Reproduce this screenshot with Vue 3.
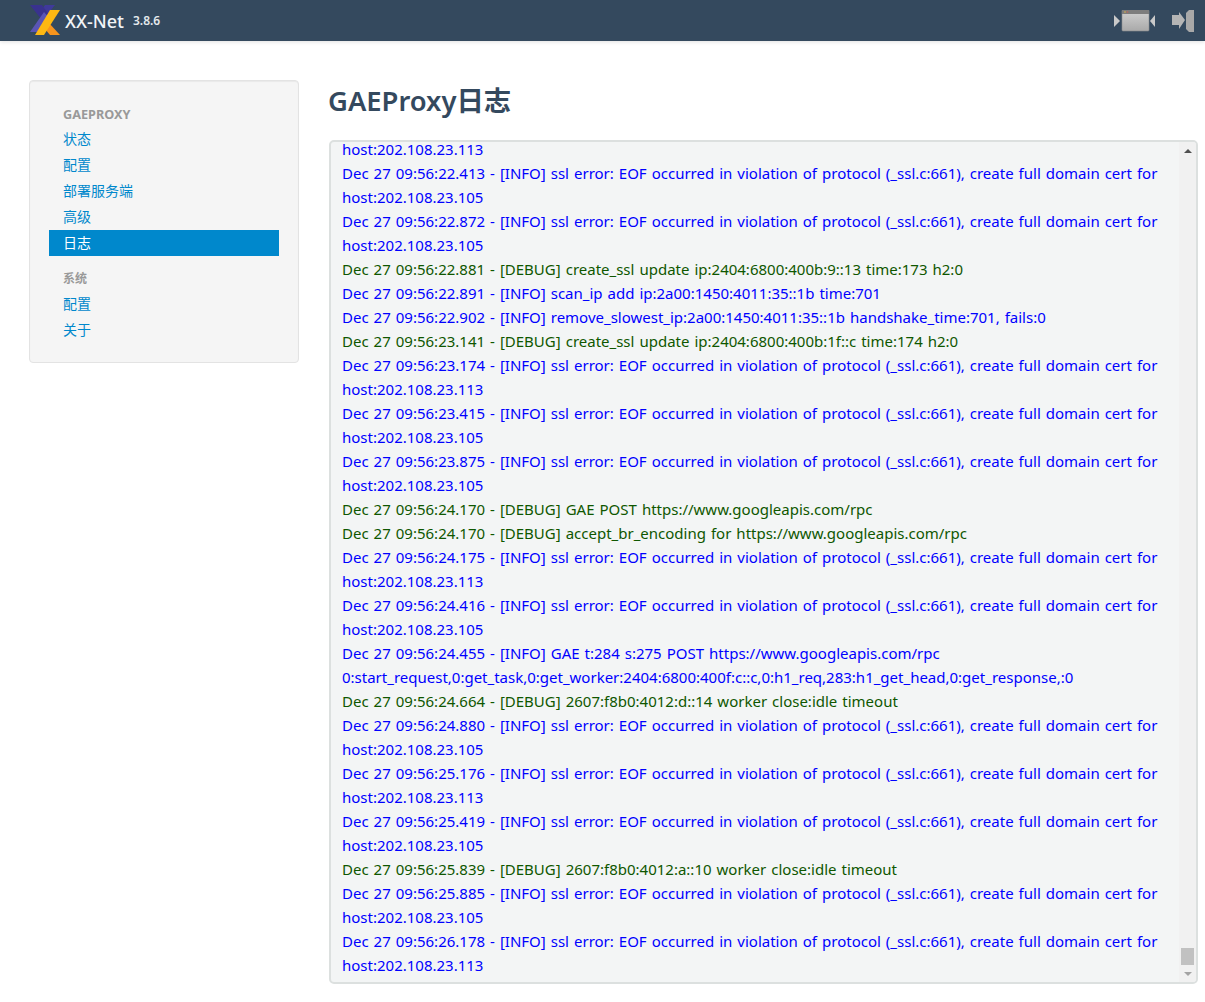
<template>
  <div class="page">
    <header class="navbar">
      <div class="brand">
        <svg class="logo" viewBox="0 0 32 32" width="32" height="32">
          <polygon points="15,0 25,0 17,10 12,4" fill="#3f3a9a" />
          <polygon points="0,0 12,0 22,14 16,20" fill="#39328f" />
          <polygon points="0,27 14,7 20,14 7,27" fill="#5a55b5" />
          <polygon points="19,18 30,30 20,30 15,24" fill="#f7941d" />
          <polygon points="20,5 30,5 14,30 5,30" fill="#fdb813" />
        </svg>
        <span class="brand-name">XX-Net</span>
        <span class="version">3.8.6</span>
      </div>
      <div class="nav-icons">
        <svg width="42" height="22" viewBox="0 0 42 22">
          <defs>
            <linearGradient id="win" x1="0" y1="0" x2="0" y2="1">
              <stop offset="0" stop-color="#d2d2d2" />
              <stop offset="1" stop-color="#a9a9a9" />
            </linearGradient>
          </defs>
          <polygon points="0,5 6,11 0,17" fill="#c9c9c9" />
          <rect x="8" y="0" width="27" height="21" rx="1" fill="url(#win)" stroke="#8e8e8e" stroke-width="0.6" />
          <rect x="8" y="0" width="27" height="4" fill="#7d7d7d" />
          <circle cx="11" cy="2" r="0.8" fill="#d8b24a" />
          <circle cx="13.5" cy="2" r="0.8" fill="#c8645a" />
          <polygon points="41,5 36,11 41,17" fill="#c9c9c9" />
        </svg>
        <svg width="23" height="22" viewBox="0 0 23 22">
          <polygon points="0,5 7,5 7,2 13,10 7,19 7,15 0,15" fill="#b5b5b5" />
          <polygon points="14,3 17,0 22,0 22,22 17,22 14,19" fill="#a8a8a8" />
        </svg>
      </div>
    </header>

    <div class="content">
      <aside class="sidebar">
        <ul class="nav-list">
          <template v-for="item in menu" :key="item.label + item.header">
            <li v-if="item.header" class="nav-header" :class="{ second: item.second }">{{ item.label }}</li>
            <li v-else class="nav-item" :class="{ active: item.active }">{{ item.label }}</li>
          </template>
        </ul>
      </aside>

      <main class="main">
        <h2 class="title">GAEProxy日志</h2>
        <div class="log-box">
          <div class="log-view">
            <div class="log-lines">
              <div v-for="(row, i) in rows" :key="i" :class="row.level">{{ row.text }}</div>
            </div>
          </div>
          <div class="scrollbar">
            <span class="arrow up"></span>
            <span class="thumb"></span>
            <span class="arrow down"></span>
          </div>
        </div>
      </main>
    </div>
  </div>
</template>

<script setup>
const menu = [
  { label: 'GAEPROXY', header: true },
  { label: '状态' },
  { label: '配置' },
  { label: '部署服务端' },
  { label: '高级' },
  { label: '日志', active: true },
  { label: '系统', header: true, second: true },
  { label: '配置' },
  { label: '关于' },
]

function sslErr(time, host) {
  return {
    level: 'info',
    text: `Dec 27 09:56:${time} - [INFO] ssl error: EOF occurred in violation of protocol (_ssl.c:661), create full domain cert for host:202.108.23.${host}`,
  }
}
const info = (time, msg) => ({ level: 'info', text: `Dec 27 09:56:${time} - [INFO] ${msg}` })
const debug = (time, msg) => ({ level: 'debug', text: `Dec 27 09:56:${time} - [DEBUG] ${msg}` })

const rows = [
  { level: 'info', text: 'host:202.108.23.113' },
  sslErr('22.413', 105),
  sslErr('22.872', 105),
  debug('22.881', 'create_ssl update ip:2404:6800:400b:9::13 time:173 h2:0'),
  info('22.891', 'scan_ip add ip:2a00:1450:4011:35::1b time:701'),
  info('22.902', 'remove_slowest_ip:2a00:1450:4011:35::1b handshake_time:701, fails:0'),
  debug('23.141', 'create_ssl update ip:2404:6800:400b:1f::c time:174 h2:0'),
  sslErr('23.174', 113),
  sslErr('23.415', 105),
  sslErr('23.875', 105),
  debug('24.170', 'GAE POST https://www.googleapis.com/rpc'),
  debug('24.170', 'accept_br_encoding for https://www.googleapis.com/rpc'),
  sslErr('24.175', 113),
  sslErr('24.416', 105),
  info('24.455', 'GAE t:284 s:275 POST https://www.googleapis.com/rpc 0:start_request,0:get_task,0:get_worker:2404:6800:400f:c::c,0:h1_req,283:h1_get_head,0:get_response,:0'),
  debug('24.664', '2607:f8b0:4012:d::14 worker close:idle timeout'),
  sslErr('24.880', 105),
  sslErr('25.176', 113),
  sslErr('25.419', 105),
  debug('25.839', '2607:f8b0:4012:a::10 worker close:idle timeout'),
  sslErr('25.885', 105),
  sslErr('26.178', 113),
]
</script>

<style>
html,
body {
  margin: 0;
  background: #fff;
}
</style>

<style scoped>
.page {
  height: 1002px;
  overflow: hidden;
  font-family: "Noto Sans", "Noto Sans CJK SC", sans-serif;
  color: #34495e;
}
.navbar {
  height: 41px;
  background: #34495e;
  box-shadow: 0 1px 4px rgba(0, 0, 0, 0.12);
  display: flex;
  align-items: center;
  justify-content: space-between;
  padding: 0 10px 0 30px;
}
.brand {
  display: flex;
  align-items: center;
}
.logo {
  margin-top: 1px;
}
.brand-name {
  margin-left: 3px;
  font-size: 18px;
  font-weight: 500;
  color: #f1f4f7;
}
.version {
  margin-left: 9px;
  font-size: 12px;
  font-weight: 600;
  color: #e4e8ec;
}
.nav-icons {
  display: flex;
  align-items: center;
  gap: 16px;
}
.content {
  display: flex;
  padding: 39px 7px 0 29px;
}
.sidebar {
  width: 270px;
  height: 283px;
  box-sizing: border-box;
  flex: none;
  background: #f5f5f5;
  border: 1px solid #e3e3e3;
  border-radius: 4px;
  padding: 19px;
  box-shadow: inset 0 1px 1px rgba(0, 0, 0, 0.05);
}
.nav-list {
  list-style: none;
  margin: 0;
  padding: 0;
  font-size: 14px;
}
.nav-header {
  height: 26px;
  line-height: 28px;
  padding-left: 14px;
  font-size: 12.7px;
  font-weight: 700;
  color: #999;
}
.nav-header.second {
  margin-top: 10px;
  height: 25px;
  line-height: 25px;
  font-size: 12px;
}
.nav-item {
  height: 26px;
  line-height: 26px;
  padding-left: 14px;
  color: #08c;
}
.nav-item.active {
  background: #08c;
  color: #fff;
}
.main {
  flex: 1;
  margin-left: 30px;
  min-width: 0;
}
.title {
  margin: 0 0 0 -1px;
  height: 60px;
  line-height: 41px;
  font-size: 27.4px;
  font-weight: 600;
  color: #34495e;
}
.log-box {
  display: flex;
  height: 844px;
  box-sizing: border-box;
  border: 2px solid #dce0df;
  border-radius: 5px;
  background: #f3f5f5;
  overflow: hidden;
}
.log-view {
  flex: 1;
  min-width: 0;
  overflow: hidden;
  padding: 0 20px 0 11px;
  font-size: 15px;
  word-spacing: 1.1px;
  line-height: 24px;
}
.log-lines {
  margin-top: -5px;
}
.info {
  color: #00f;
}
.debug {
  color: #0f5700;
}
.scrollbar {
  width: 17px;
  flex: none;
  background: #f1f1f1;
  display: flex;
  flex-direction: column;
  align-items: center;
}
.arrow {
  width: 0;
  height: 0;
  border-left: 4px solid transparent;
  border-right: 4px solid transparent;
}
.arrow.up {
  border-bottom: 4px solid #505050;
  margin-top: 7px;
}
.thumb {
  width: 13px;
  height: 17px;
  background: #c1c1c1;
  margin-top: auto;
}
.arrow.down {
  border-top: 4px solid #a3a3a3;
  margin: 7px 0 6px;
}
</style>
